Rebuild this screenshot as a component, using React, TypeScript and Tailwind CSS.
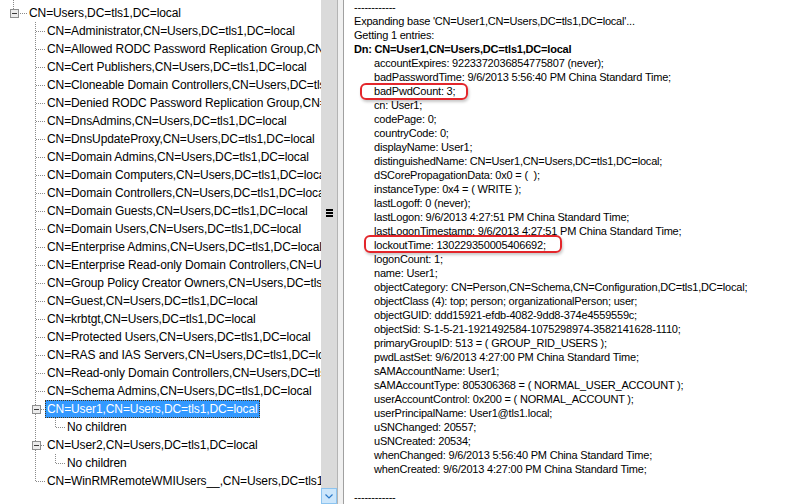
import React from "react";

const DOT = "#8a8a8a";

type Kind = "root" | "leaf" | "last" | "open" | "child";

function Dots({ x1, y1, x2, y2 }: { x1: number; y1: number; x2: number; y2: number }) {
  return (
    <line
      x1={x1}
      y1={y1}
      x2={x2}
      y2={y2}
      stroke={DOT}
      strokeWidth={1}
      strokeDasharray="1 1"
      shapeRendering="crispEdges"
    />
  );
}

function Box({ cx }: { cx: number }) {
  return (
    <g shapeRendering="crispEdges">
      <rect x={cx - 3.5} y={5.5} width={8} height={8} fill="#ececec" stroke="#8e8f8f" />
      <line x1={cx - 2} y1={9.5} x2={cx + 3} y2={9.5} stroke="#3b3b3b" />
    </g>
  );
}

function Guides({ kind }: { kind: Kind }) {
  if (kind === "root") {
    return (
      <svg width={27} height={18} className="shrink-0">
        <Dots x1={13.5} y1={0} x2={13.5} y2={5} />
        <Dots x1={18} y1={9.5} x2={27} y2={9.5} />
        <Box cx={13.5} />
      </svg>
    );
  }
  if (kind === "child") {
    return (
      <svg width={65} height={18} className="shrink-0">
        <Dots x1={35.5} y1={0} x2={35.5} y2={18} />
        <Dots x1={55.5} y1={0} x2={55.5} y2={9.5} />
        <Dots x1={56} y1={9.5} x2={65} y2={9.5} />
      </svg>
    );
  }
  return (
    <svg width={45} height={18} className="shrink-0">
      <Dots x1={35.5} y1={0} x2={35.5} y2={kind === "last" ? 10 : 18} />
      <Dots x1={kind === "open" ? 41 : 36} y1={9.5} x2={45} y2={9.5} />
      {kind === "open" && <Box cx={35.5} />}
    </svg>
  );
}

function Row({ kind, label, selected }: { kind: Kind; label: string; selected?: boolean }) {
  return (
    <div className="flex h-[18px] items-center whitespace-nowrap">
      <Guides kind={kind} />
      <span
        className={
          selected
            ? "h-[18px] border border-dotted border-[#4a3414] bg-[#3399ff] px-[1px] leading-[16px] text-white"
            : "h-[18px] border border-transparent px-[1px] leading-[16px] text-black"
        }
      >
        {label}
      </span>
    </div>
  );
}

const sfx = ",CN=Users,DC=tls1,DC=local";

const users = [
  "Administrator",
  "Allowed RODC Password Replication Group",
  "Cert Publishers",
  "Cloneable Domain Controllers",
  "Denied RODC Password Replication Group",
  "DnsAdmins",
  "DnsUpdateProxy",
  "Domain Admins",
  "Domain Computers",
  "Domain Controllers",
  "Domain Guests",
  "Domain Users",
  "Enterprise Admins",
  "Enterprise Read-only Domain Controllers",
  "Group Policy Creator Owners",
  "Guest",
  "krbtgt",
  "Protected Users",
  "RAS and IAS Servers",
  "Read-only Domain Controllers",
  "Schema Admins",
];

const attrs = [
  "accountExpires: 9223372036854775807 (never);",
  "badPasswordTime: 9/6/2013 5:56:40 PM China Standard Time;",
  "badPwdCount: 3;",
  "cn: User1;",
  "codePage: 0;",
  "countryCode: 0;",
  "displayName: User1;",
  "distinguishedName: CN=User1,CN=Users,DC=tls1,DC=local;",
  "dSCorePropagationData: 0x0 = (  );",
  "instanceType: 0x4 = ( WRITE );",
  "lastLogoff: 0 (never);",
  "lastLogon: 9/6/2013 4:27:51 PM China Standard Time;",
  "lastLogonTimestamp: 9/6/2013 4:27:51 PM China Standard Time;",
  "lockoutTime: 130229350005406692;",
  "logonCount: 1;",
  "name: User1;",
  "objectCategory: CN=Person,CN=Schema,CN=Configuration,DC=tls1,DC=local;",
  "objectClass (4): top; person; organizationalPerson; user;",
  "objectGUID: ddd15921-efdb-4082-9dd8-374e4559559c;",
  "objectSid: S-1-5-21-1921492584-1075298974-3582141628-1110;",
  "primaryGroupID: 513 = ( GROUP_RID_USERS );",
  "pwdLastSet: 9/6/2013 4:27:00 PM China Standard Time;",
  "sAMAccountName: User1;",
  "sAMAccountType: 805306368 = ( NORMAL_USER_ACCOUNT );",
  "userAccountControl: 0x200 = ( NORMAL_ACCOUNT );",
  "userPrincipalName: User1@tls1.local;",
  "uSNChanged: 20557;",
  "uSNCreated: 20534;",
  "whenChanged: 9/6/2013 5:56:40 PM China Standard Time;",
  "whenCreated: 9/6/2013 4:27:00 PM China Standard Time;",
];

export default function App() {
  return (
    <div className="flex h-[504px] w-[807px] overflow-hidden bg-white font-['Liberation_Sans',Arial,sans-serif]">
      {/* tree */}
      <div className="h-full w-[321px] shrink-0 overflow-hidden text-[12px] tracking-[-0.1px]">
        <svg width={27} height={4} className="block">
          <Dots x1={13.5} y1={0} x2={13.5} y2={4} />
        </svg>
        <Row kind="root" label="CN=Users,DC=tls1,DC=local" />
        {users.map((u) => (
          <Row key={u} kind="leaf" label={"CN=" + u + sfx} />
        ))}
        <Row kind="open" label={"CN=User1" + sfx} selected />
        <Row kind="child" label="No children" />
        <Row kind="open" label={"CN=User2" + sfx} />
        <Row kind="child" label="No children" />
        <Row kind="last" label={"CN=WinRMRemoteWMIUsers__" + sfx} />
      </div>

      {/* scrollbar */}
      <div className="flex h-full w-[16px] shrink-0 flex-col bg-[#dadada]">
        <div className="flex flex-1 flex-col items-center gap-[1px] pt-[209px]">
          <div className="h-[2px] w-[7px] bg-black" />
          <div className="h-[2px] w-[7px] bg-black" />
          <div className="h-[2px] w-[7px] bg-black" />
        </div>
        <div className="flex h-[16px] items-center justify-center border border-[#8cc4f0] bg-[#cce6fb]">
          <svg width={8} height={5} viewBox="0 0 8 5">
            <path d="M0.5 0.5 L4 4 L7.5 0.5" fill="none" stroke="#2a78c8" strokeWidth={1.2} />
          </svg>
        </div>
      </div>

      {/* splitter */}
      <div className="h-full w-[1px] shrink-0 bg-[#b4b4b4]" />
      <div className="h-full w-[5px] shrink-0 bg-[#f0f0f0]" />
      <div className="h-full w-[1px] shrink-0 bg-[#a0a0a0]" />

      {/* output */}
      <div className="relative h-full flex-1 overflow-hidden whitespace-pre pl-[10px] text-[11px] leading-[14px] tracking-[-0.2px] text-black">
        <div>------------</div>
        <div>Expanding base 'CN=User1,CN=Users,DC=tls1,DC=local'...</div>
        <div>Getting 1 entries:</div>
        <div className="font-bold">Dn: CN=User1,CN=Users,DC=tls1,DC=local</div>
        <div className="pl-[20px]">
          {attrs.map((a) => (
            <div key={a}>{a}</div>
          ))}
        </div>
        <div className="h-[14px]" />
        <div>------------</div>

        <div className="absolute left-[16px] top-[83px] h-[17px] w-[108px] rounded-[6px] border-2 border-[#e3262b] shadow-[1px_2px_3px_rgba(0,0,0,0.22)]" />
        <div className="absolute left-[20px] top-[235px] h-[18px] w-[198px] rounded-[6px] border-2 border-[#e3262b] shadow-[1px_2px_3px_rgba(0,0,0,0.22)]" />
      </div>
    </div>
  );
}
